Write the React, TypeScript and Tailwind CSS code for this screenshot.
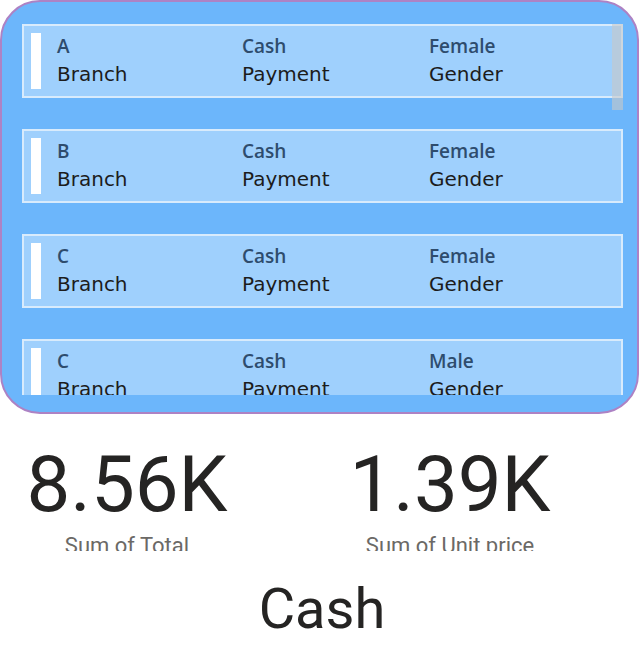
const rows = [
  { b: "A", p: "Cash", g: "Female" },
  { b: "B", p: "Cash", g: "Female" },
  { b: "C", p: "Cash", g: "Female" },
  { b: "C", p: "Cash", g: "Male" },
  { b: "C", p: "Cash", g: "Male" },
];

function Cell({ top, bottom, w }: { top: string; bottom: string; w: string }) {
  return (
    <div className={w}>
      <div className="font-['Open_Sans',sans-serif] font-semibold text-[19px] leading-[28px] text-[#2e4c6d]">
        {top}
      </div>
      <div className="font-['DejaVu_Sans',sans-serif] text-[20px] leading-[28px] text-[#1c1c1c]">
        {bottom}
      </div>
    </div>
  );
}

export default function App() {
  return (
    <div className="w-[640px] h-[650px] bg-white overflow-hidden relative">
      <div className="box-border relative w-[639px] h-[414px] rounded-[40px] border-2 border-[#ad82c4] bg-[#6cb6fb] pt-[22px] pl-[20px]">
        <div className="h-[371px] overflow-hidden flex flex-col gap-[31px]">
          {rows.map((r, i) => (
            <div
              key={i}
              className="box-border shrink-0 w-[601px] h-[74px] border-2 border-[#d8ebfc] bg-[#9fd0fd] flex"
            >
              <div className="mt-[7px] ml-[7px] w-[10px] h-[56px] bg-white shrink-0" />
              <div className="ml-[16px] pt-[6px] flex">
                <Cell top={r.b} bottom="Branch" w="w-[185px]" />
                <Cell top={r.p} bottom="Payment" w="w-[187px]" />
                <Cell top={r.g} bottom="Gender" w="w-[150px]" />
              </div>
            </div>
          ))}
        </div>
        <div className="absolute left-[610px] top-[22px] w-[11px] h-[86px] bg-[rgba(200,200,200,0.6)]" />
      </div>

      <div className="mt-[32px] flex font-['Roboto',sans-serif]">
        <div className="w-[254px] flex flex-col items-center">
          <div className="text-[78px] leading-[78px] text-[#252423]">8.56K</div>
          <div className="mt-[11px] h-[16px] overflow-hidden text-[22px] leading-[22px] text-[#6b6966]">
            Sum of Total
          </div>
        </div>
        <div className="ml-[46px] w-[300px] flex flex-col items-center">
          <div className="text-[78px] leading-[78px] text-[#252423]">1.39K</div>
          <div className="mt-[11px] h-[16px] overflow-hidden text-[22px] leading-[22px] text-[#6b6966]">
            Sum of Unit price
          </div>
        </div>
      </div>

      <div className="mt-[30px] pl-[4px] text-center font-['Roboto',sans-serif] text-[56px] leading-[56px] text-[#252423]">
        Cash
      </div>
    </div>
  );
}
